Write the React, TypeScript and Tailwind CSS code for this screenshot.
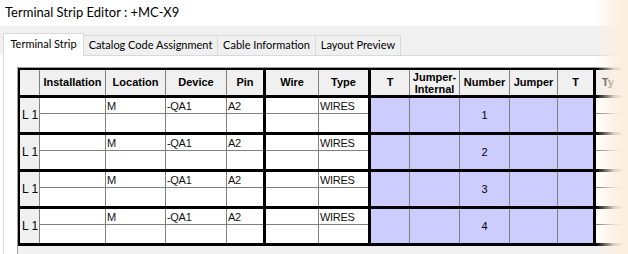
import React from "react";

type Cell = {
  w: string;
  border: string;
  head: React.ReactNode;
  kind: "rowhdr" | "split" | "merge";
  top?: string;
  topCls?: string;
  blue?: boolean;
  num?: boolean;
  headCls?: string;
};

const GRAY = "border-r border-[#808080]";
const THICK = "border-r-[3px] border-black";

const cols: Cell[] = [
  { w: "w-[20px]", border: GRAY, head: "", kind: "rowhdr" },
  { w: "w-[66px]", border: GRAY, head: "Installation", kind: "split" },
  { w: "w-[60px]", border: GRAY, head: "Location", kind: "split", top: "M", topCls: "text-[#5f5440]" },
  { w: "w-[61px]", border: GRAY, head: "Device", kind: "split", top: "-QA1" },
  { w: "w-[39px]", border: THICK, head: "Pin", kind: "split", top: "A2" },
  { w: "w-[53px]", border: GRAY, head: "Wire", kind: "split" },
  { w: "w-[52px]", border: THICK, head: "Type", kind: "split", top: "WIRES" },
  { w: "w-[39px]", border: GRAY, head: "T", kind: "merge", blue: true },
  {
    w: "w-[50px]",
    border: GRAY,
    head: (
      <span className="leading-[12px] block">
        Jumper-
        <br />
        Internal
      </span>
    ),
    kind: "merge",
    blue: true,
  },
  { w: "w-[50px]", border: GRAY, head: "Number", kind: "merge", blue: true, num: true },
  { w: "w-[48px]", border: GRAY, head: "Jumper", kind: "merge", blue: true },
  { w: "w-[38px]", border: THICK, head: "T", kind: "merge", blue: true },
  { w: "w-[32px]", border: GRAY, head: "Ty", kind: "split", headCls: "text-[#a8a8a8] justify-start pl-[6px]" },
];

function HeaderRow() {
  return (
    <div className="flex h-[28px] border-b-[3px] border-black">
      {cols.map((c, i) => (
        <div
          key={i}
          className={`${c.w} ${c.border} shrink-0 bg-[#f0f0f0] flex items-center justify-center text-center font-bold text-[11px] text-black whitespace-nowrap overflow-hidden ${c.headCls ?? ""}`}
        >
          {c.head}
        </div>
      ))}
    </div>
  );
}

function DataRow({ n }: { n: number }) {
  return (
    <div className="flex h-[37px] border-b-[3px] border-black">
      {cols.map((c, i) => {
        if (c.kind === "rowhdr") {
          return (
            <div
              key={i}
              className={`${c.w} ${c.border} shrink-0 bg-[#f0f0f0] flex items-center pl-[2px] text-[12px] text-black whitespace-nowrap`}
            >
              L 1
            </div>
          );
        }
        if (c.kind === "merge") {
          return (
            <div
              key={i}
              className={`${c.w} ${c.border} shrink-0 bg-[#ccccff] flex items-center justify-center text-[11px] text-black`}
            >
              {c.num ? n : ""}
            </div>
          );
        }
        return (
          <div key={i} className={`${c.w} ${c.border} shrink-0 bg-white flex flex-col`}>
            <div
              className={`h-[16px] border-b border-[#808080] pl-[1px] pt-[1px] text-[11px] leading-[14px] tracking-[-0.3px] text-[#111] ${c.topCls ?? ""}`}
            >
              {c.top ?? ""}
            </div>
            <div className="flex-1" />
          </div>
        );
      })}
    </div>
  );
}

const uiFont = { fontFamily: 'Lato, "Noto Sans", sans-serif' };

export default function App() {
  return (
    <div
      className="relative w-[628px] h-[254px] overflow-hidden bg-white"
      style={{ fontFamily: '"Liberation Sans", Arial, sans-serif' }}
    >
      <div className="h-[26px] pl-[5px] flex items-center text-[13px] text-black" style={uiFont}>
        Terminal Strip Editor : +MC-X9
      </div>
      <div
        className="h-[29px] bg-[#f0f0f0] pl-[3px] flex items-end text-[11px] text-black whitespace-nowrap"
        style={uiFont}
      >
        <div className="relative z-10 -mb-px h-[23px] w-[81px] bg-white border border-b-0 border-[#d9d9d9] flex items-center justify-center pb-[2px]">
          Terminal Strip
        </div>
        <div className="h-[20px] w-[134px] border border-l-0 border-b-0 border-[#d9d9d9] bg-[#f0f0f0] flex items-center justify-center">
          Catalog Code Assignment
        </div>
        <div className="h-[20px] w-[98px] border border-l-0 border-b-0 border-[#d9d9d9] bg-[#f0f0f0] flex items-center justify-center">
          Cable Information
        </div>
        <div className="h-[20px] w-[85px] border border-l-0 border-b-0 border-[#d9d9d9] bg-[#f0f0f0] flex items-center justify-center">
          Layout Preview
        </div>
      </div>
      <div className="ml-[3px] h-[199px] border-l border-t border-[#d9d9d9] bg-white pt-[11px] pl-[13px]">
        <div className="h-full border-l border-t border-[#a0a0a0] bg-[#f0f0f0] overflow-hidden">
          <div className="border-l-2 border-t-2 border-black w-max">
            <HeaderRow />
            {[1, 2, 3, 4].map((n) => (
              <DataRow key={n} n={n} />
            ))}
          </div>
        </div>
      </div>
      <div className="absolute right-0 top-0 h-full w-[32px] bg-[linear-gradient(to_right,rgba(252,239,224,0)_0%,rgba(252,239,224,0.85)_55%,#fcefe0_85%)]" />
    </div>
  );
}
